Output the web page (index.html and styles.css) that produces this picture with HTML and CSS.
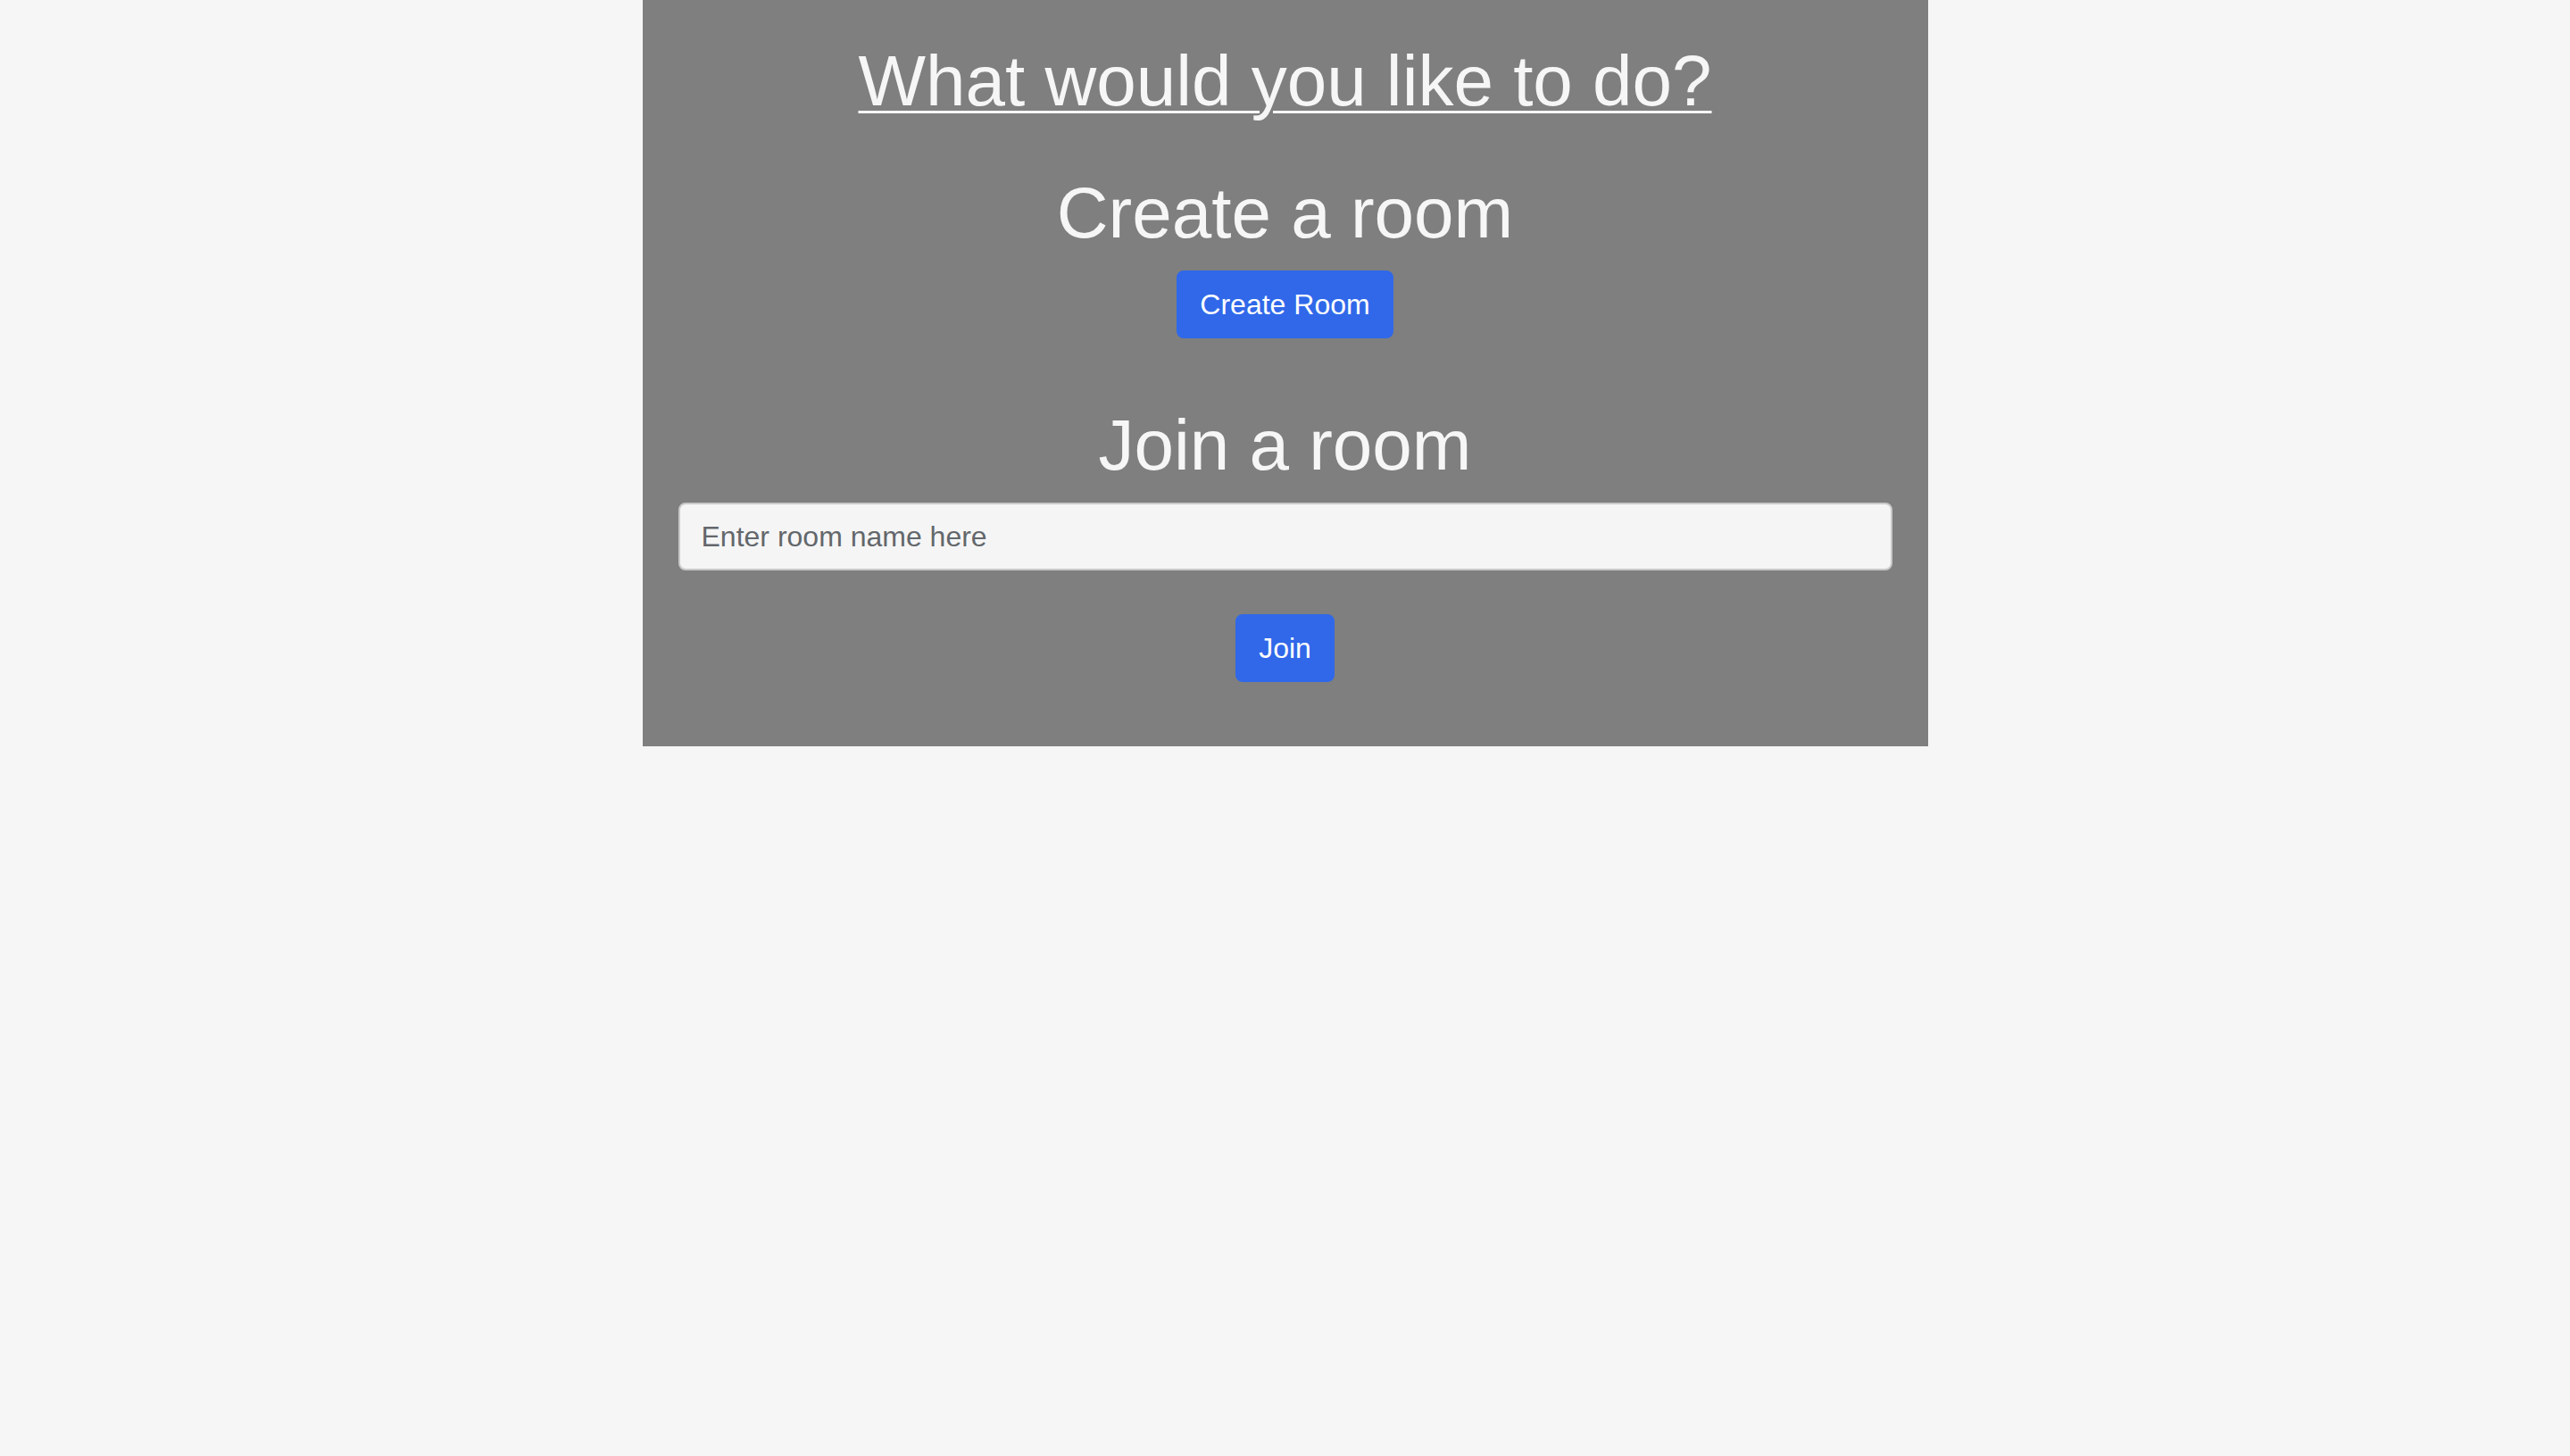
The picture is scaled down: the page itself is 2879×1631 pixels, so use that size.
FILE: index.html
```html
<!DOCTYPE html>
<html lang="en">
<head>
    <meta charset="UTF-8">
    <meta name="viewport" content="width=device-width, initial-scale=1.0">
    <title>Rooms</title>
    <link rel="stylesheet" href="styles.css">
</head>
<body>
    <div class="panel">
        <h1 class="title">What would you like to do?</h1>

        <section class="room-section create-section">
            <h1>Create a room</h1>
            <button class="btn" id="createBtn">Create Room</button>
        </section>

        <section class="room-section">
            <h1>Join a room</h1>
            <input type="text" class="room-input" id="roomName" placeholder="Enter room name here">
            <button class="btn" id="joinBtn">Join</button>
        </section>
    </div>
</body>
</html>
```

FILE: styles.css
```css
* {
    margin: 0;
    padding: 0;
    box-sizing: border-box;
    font-family: 'Liberation Sans', Arial, Helvetica, sans-serif;
}

body {
    background-color: #f6f6f6;
}

.panel {
    width: 1440px;
    margin: 0 auto;
    padding: 43px 40px 72px;
    background-color: #7f7f7f;
    color: #f6f6f6;
    text-align: center;
}

h1 {
    font-size: 80px;
    font-weight: 400;
    line-height: 1.2;
    margin-bottom: 16px;
}

.title {
    margin-bottom: 52px;
    text-decoration: underline;
    text-decoration-thickness: 3px;
    text-underline-offset: 6px;
}

.room-section {
    display: flex;
    flex-direction: column;
    align-items: center;
}

.create-section {
    margin-bottom: 72px;
}

.btn {
    background-color: #3068e9;
    color: #fff;
    border: 2px solid #3068e9;
    border-radius: 8px;
    padding: 12px 24px;
    font-size: 32px;
    line-height: 48px;
    cursor: pointer;
}

.btn:hover {
    background-color: #2456c9;
}

.room-input {
    align-self: stretch;
    background-color: #f5f5f5;
    border: 2px solid #c9c9c9;
    border-radius: 8px;
    padding: 12px 24px;
    font-size: 32px;
    line-height: 48px;
    color: #333;
    margin-bottom: 49px;
}

.room-input::placeholder {
    color: #63676b;
}
```
